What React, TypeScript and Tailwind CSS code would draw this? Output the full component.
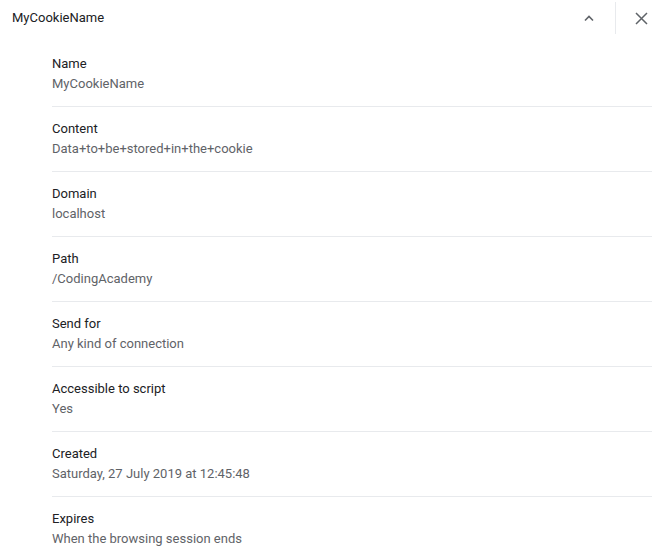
import React from 'react';

const rows: { label: string; value: string }[] = [
  { label: 'Name', value: 'MyCookieName' },
  { label: 'Content', value: 'Data+to+be+stored+in+the+cookie' },
  { label: 'Domain', value: 'localhost' },
  { label: 'Path', value: '/CodingAcademy' },
  { label: 'Send for', value: 'Any kind of connection' },
  { label: 'Accessible to script', value: 'Yes' },
  { label: 'Created', value: 'Saturday, 27 July 2019 at 12:45:48' },
  { label: 'Expires', value: 'When the browsing session ends' },
];

export default function App() {
  return (
    <div className="h-[559px] w-[663px] overflow-hidden bg-white font-['Roboto',sans-serif] text-[13px]">
      {/* header */}
      <div className="flex h-[36px] items-center">
        <div className="flex-1 pl-[12px] text-[#202124]">MyCookieName</div>
        <button className="flex h-[36px] w-[52px] items-center justify-center text-[#5f6368]">
          <svg width="10" height="7" viewBox="0 0 10 7" fill="none">
            <path d="M1 5.5 L5 1.5 L9 5.5" stroke="currentColor" strokeWidth="1.6" />
          </svg>
        </button>
        <div className="h-[32px] w-px bg-[#e8eaed]" />
        <button className="flex h-[36px] w-[47px] items-center justify-center pl-[3px] text-[#5f6368]">
          <svg width="13" height="13" viewBox="0 0 13 13" fill="none">
            <path d="M1 1 L12 12 M12 1 L1 12" stroke="currentColor" strokeWidth="1.5" />
          </svg>
        </button>
      </div>

      {/* details */}
      <div className="ml-[52px] mr-[11px] pt-[6px]">
        {rows.map((row, i) => (
          <div
            key={row.label}
            className={`py-3 leading-[20px] ${i < rows.length - 1 ? 'border-b border-[#e8eaed]' : ''}`}
          >
            <div className="text-[#202124]">{row.label}</div>
            <div className="text-[#5f6368]">{row.value}</div>
          </div>
        ))}
      </div>
    </div>
  );
}
